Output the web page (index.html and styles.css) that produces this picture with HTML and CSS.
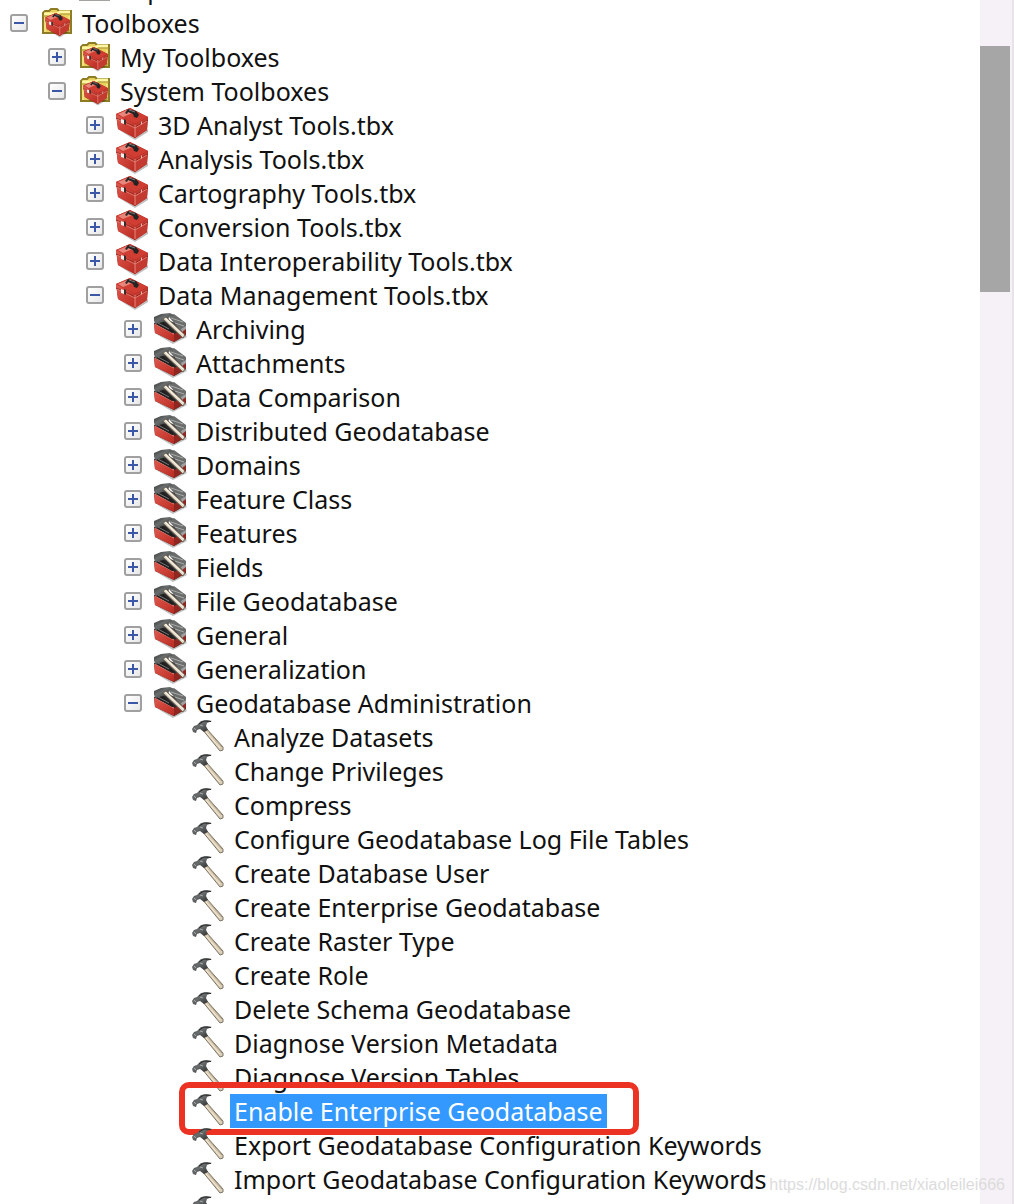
FILE: index.html
```html
<!DOCTYPE html>
<html lang="en">
<head>
    <meta charset="UTF-8">
    <meta name="viewport" content="width=device-width, initial-scale=1.0">
    <title>Toolboxes</title>
    <link rel="stylesheet" href="styles.css">
</head>
<body>
    <svg class="defs" aria-hidden="true">
        <defs>
            <linearGradient id="red" x1="0" y1="0" x2="1" y2="1">
                <stop offset="0" stop-color="#e0584d"/>
                <stop offset="1" stop-color="#b92a21"/>
            </linearGradient>
            <linearGradient id="steel" x1="0" y1="0" x2="1" y2="1">
                <stop offset="0" stop-color="#333"/>
                <stop offset=".4" stop-color="#6a6d6d"/>
                <stop offset="1" stop-color="#1d1e1e"/>
            </linearGradient>
        </defs>
        <symbol id="box" viewBox="0 0 36 34">
            <path d="M3 22l16 10 13-8v-3l-13 8z" fill="#000" opacity=".25"/>
            <path d="M0 6L14 0l18 9-1 13-12 8L2 21z" fill="#9d1c16"/>
            <path d="M0 6L14 0l18 9-13 7z" fill="#cf3d33"/>
            <path d="M2 6l12-5 5 3-12 5z" fill="#e8867b"/>
            <path d="M0 6l19 10v14L2 21z" fill="url(#red)"/>
            <path d="M19 16l13-7-1 13-12 8z" fill="#c23a30"/>
            <path d="M0 10l19 9 13-7" fill="none" stroke="#8a211a" stroke-width="1"/>
            <path d="M1 11l18 9 12-7" fill="none" stroke="#e7786c" stroke-width="1"/>
            <path d="M9 5l3-4 8 2 3 4-2 3-3-1-1-3-5-2-1 2z" fill="#242424"/>
            <path d="M13 2l6 2" stroke="#777" stroke-width="1"/>
            <path d="M5 11l3 1v4l-3-1z" fill="#eee"/>
            <path d="M8 11l2 1v5l-2-1z" fill="#3b2a28"/>
            <path d="M25 14l1-1v3l-1 1z" fill="#d9b5b0"/>
            <path d="M19 17v12" stroke="#e6877d" stroke-width="1"/>
        </symbol>
        <symbol id="folder" viewBox="0 0 36 34">
            <path d="M3 7l2-2h4l2-2h6l2 2h12v22H3z" fill="#e6d25c" stroke="#8d7c25" stroke-width="2"/>
            <path d="M4 8h13l3-2h10" fill="none" stroke="#fff6a4" stroke-width="3"/>
            <path d="M3 10h14l3-2h11" fill="none" stroke="#a89435" stroke-width="1"/>
            <path d="M5 11v15M29 10v4" stroke="#fbf0a0" stroke-width="1"/>
            <use href="#box" x="5" y="7" width="28" height="26"/>
        </symbol>
        <symbol id="toolset" viewBox="0 0 36 34">
            <path d="M2 22l17 10 14-7-2-3-12 7z" fill="#000" opacity=".25"/>
            <path d="M0 11l8-5 24 9v8l-12 7L1 21z" fill="#2c2a2a"/>
            <path d="M0 12l20 10v8L1 21z" fill="url(#red)"/>
            <path d="M20 22l12-6v7l-12 7z" fill="#8f2720"/>
            <path d="M1 12l19 10" stroke="#f08376" stroke-width="1"/>
            <path d="M15 5l5-3 12 9v4l-5 4z" fill="#6b6d6c"/>
            <path d="M17 6l12 4M21 11l9 3" stroke="#a9aba9" stroke-width="1"/>
            <path d="M27 17l5-3v3l-4 3z" fill="#9fa09f"/>
            <path d="M0 5l7-3 9-1 4 2-5 2-1 4-5 1-2 3-5-1-2-3z" fill="url(#steel)"/>
            <path d="M2 12l7-2 11 10-2 1z" fill="#1f1f1f"/>
            <path d="M4 11l11 6" stroke="#777" stroke-width="1"/>
            <path d="M9 7l3-2 19 18-2 3z" fill="#e2d8c6" stroke="#6e655a" stroke-width="1"/>
            <path d="M11 6l18 17" stroke="#fff8ea" stroke-width="1"/>
        </symbol>
        <symbol id="hammer" viewBox="0 0 36 34">
            <path d="M10 9l4-1 17 19v3l-3 1z" fill="#dacdb6" stroke="#7d7364" stroke-width="1"/>
            <path d="M14 12l14 16" stroke="#f5ead8" stroke-width="1"/>
            <path d="M17 12l13 15" stroke="#a3967f" stroke-width="1"/>
            <path d="M0 9l2-3 3-1 4-4 6-1 5 1-5 2-1 3 2 4-4 2-4-3-3 1-1 3-3-1z" fill="url(#steel)"/>
            <path d="M7 4l5-3 7 .5" fill="none" stroke="#2a2c2c" stroke-width="1"/>
            <path d="M2 8l2 2M8 5l3 1" stroke="#a5a8a8" stroke-width="1"/>
        </symbol>
    </svg>

    <main class="panel">
        <ul class="tree">
            <li>
                <ul>
                    <li><div class="row leaf"><svg class="icon"><rect x="2" y="4" width="29" height="24" fill="#d6d6d2" stroke="#a3a39f" stroke-width="2"/></svg><span class="label">Exp</span></div></li>
                </ul>
            </li>
            <li>
                <div class="row"><button class="toggle" aria-expanded="true" aria-label="Toolboxes"></button><svg class="icon"><use href="#folder"/></svg><span class="label">Toolboxes</span></div>
                <ul>
                    <li><div class="row"><button class="toggle" aria-expanded="false" aria-label="My Toolboxes"></button><svg class="icon"><use href="#folder"/></svg><span class="label">My Toolboxes</span></div></li>
                    <li>
                        <div class="row"><button class="toggle" aria-expanded="true" aria-label="System Toolboxes"></button><svg class="icon"><use href="#folder"/></svg><span class="label">System Toolboxes</span></div>
                        <ul>
                            <li><div class="row"><button class="toggle" aria-expanded="false" aria-label="3D Analyst Tools"></button><svg class="icon"><use href="#box"/></svg><span class="label">3D Analyst Tools.tbx</span></div></li>
                            <li><div class="row"><button class="toggle" aria-expanded="false" aria-label="Analysis Tools"></button><svg class="icon"><use href="#box"/></svg><span class="label">Analysis Tools.tbx</span></div></li>
                            <li><div class="row"><button class="toggle" aria-expanded="false" aria-label="Cartography Tools"></button><svg class="icon"><use href="#box"/></svg><span class="label">Cartography Tools.tbx</span></div></li>
                            <li><div class="row"><button class="toggle" aria-expanded="false" aria-label="Conversion Tools"></button><svg class="icon"><use href="#box"/></svg><span class="label">Conversion Tools.tbx</span></div></li>
                            <li><div class="row"><button class="toggle" aria-expanded="false" aria-label="Data Interoperability Tools"></button><svg class="icon"><use href="#box"/></svg><span class="label">Data Interoperability Tools.tbx</span></div></li>
                            <li>
                                <div class="row"><button class="toggle" aria-expanded="true" aria-label="Data Management Tools"></button><svg class="icon"><use href="#box"/></svg><span class="label">Data Management Tools.tbx</span></div>
                                <ul>
                                    <li><div class="row"><button class="toggle" aria-expanded="false" aria-label="Archiving"></button><svg class="icon"><use href="#toolset"/></svg><span class="label">Archiving</span></div></li>
                                    <li><div class="row"><button class="toggle" aria-expanded="false" aria-label="Attachments"></button><svg class="icon"><use href="#toolset"/></svg><span class="label">Attachments</span></div></li>
                                    <li><div class="row"><button class="toggle" aria-expanded="false" aria-label="Data Comparison"></button><svg class="icon"><use href="#toolset"/></svg><span class="label">Data Comparison</span></div></li>
                                    <li><div class="row"><button class="toggle" aria-expanded="false" aria-label="Distributed Geodatabase"></button><svg class="icon"><use href="#toolset"/></svg><span class="label">Distributed Geodatabase</span></div></li>
                                    <li><div class="row"><button class="toggle" aria-expanded="false" aria-label="Domains"></button><svg class="icon"><use href="#toolset"/></svg><span class="label">Domains</span></div></li>
                                    <li><div class="row"><button class="toggle" aria-expanded="false" aria-label="Feature Class"></button><svg class="icon"><use href="#toolset"/></svg><span class="label">Feature Class</span></div></li>
                                    <li><div class="row"><button class="toggle" aria-expanded="false" aria-label="Features"></button><svg class="icon"><use href="#toolset"/></svg><span class="label">Features</span></div></li>
                                    <li><div class="row"><button class="toggle" aria-expanded="false" aria-label="Fields"></button><svg class="icon"><use href="#toolset"/></svg><span class="label">Fields</span></div></li>
                                    <li><div class="row"><button class="toggle" aria-expanded="false" aria-label="File Geodatabase"></button><svg class="icon"><use href="#toolset"/></svg><span class="label">File Geodatabase</span></div></li>
                                    <li><div class="row"><button class="toggle" aria-expanded="false" aria-label="General"></button><svg class="icon"><use href="#toolset"/></svg><span class="label">General</span></div></li>
                                    <li><div class="row"><button class="toggle" aria-expanded="false" aria-label="Generalization"></button><svg class="icon"><use href="#toolset"/></svg><span class="label">Generalization</span></div></li>
                                    <li>
                                        <div class="row"><button class="toggle" aria-expanded="true" aria-label="Geodatabase Administration"></button><svg class="icon"><use href="#toolset"/></svg><span class="label">Geodatabase Administration</span></div>
                                        <ul>
                                            <li><div class="row leaf"><svg class="icon"><use href="#hammer"/></svg><span class="label">Analyze Datasets</span></div></li>
                                            <li><div class="row leaf"><svg class="icon"><use href="#hammer"/></svg><span class="label">Change Privileges</span></div></li>
                                            <li><div class="row leaf"><svg class="icon"><use href="#hammer"/></svg><span class="label">Compress</span></div></li>
                                            <li><div class="row leaf"><svg class="icon"><use href="#hammer"/></svg><span class="label">Configure Geodatabase Log File Tables</span></div></li>
                                            <li><div class="row leaf"><svg class="icon"><use href="#hammer"/></svg><span class="label">Create Database User</span></div></li>
                                            <li><div class="row leaf"><svg class="icon"><use href="#hammer"/></svg><span class="label">Create Enterprise Geodatabase</span></div></li>
                                            <li><div class="row leaf"><svg class="icon"><use href="#hammer"/></svg><span class="label">Create Raster Type</span></div></li>
                                            <li><div class="row leaf"><svg class="icon"><use href="#hammer"/></svg><span class="label">Create Role</span></div></li>
                                            <li><div class="row leaf"><svg class="icon"><use href="#hammer"/></svg><span class="label">Delete Schema Geodatabase</span></div></li>
                                            <li><div class="row leaf"><svg class="icon"><use href="#hammer"/></svg><span class="label">Diagnose Version Metadata</span></div></li>
                                            <li><div class="row leaf"><svg class="icon"><use href="#hammer"/></svg><span class="label">Diagnose Version Tables</span></div></li>
                                            <li><div class="row leaf selected"><svg class="icon"><use href="#hammer"/></svg><span class="label">Enable Enterprise Geodatabase</span></div></li>
                                            <li><div class="row leaf"><svg class="icon"><use href="#hammer"/></svg><span class="label">Export Geodatabase Configuration Keywords</span></div></li>
                                            <li><div class="row leaf"><svg class="icon"><use href="#hammer"/></svg><span class="label">Import Geodatabase Configuration Keywords</span></div></li>
                                            <li><div class="row leaf"><svg class="icon"><use href="#hammer"/></svg><span class="label">Migrate Storage</span></div></li>
                                        </ul>
                                    </li>
                                </ul>
                            </li>
                        </ul>
                    </li>
                </ul>
            </li>
        </ul>
    </main>
    <div class="scrollbar"><div class="thumb"></div></div>
    <div class="watermark">https://blog.csdn.net/xiaoleilei666</div>

    <script>
        document.querySelectorAll('.toggle').forEach((btn) => {
            btn.addEventListener('click', () => {
                const open = btn.getAttribute('aria-expanded') === 'true';
                const list = btn.parentElement.nextElementSibling;
                btn.setAttribute('aria-expanded', String(!open));
                if (list) list.hidden = open;
            });
        });
    </script>
</body>
</html>
```
FILE: styles.css
```css
body {
    display: flex;
    height: 100vh;
    margin: 0;
    overflow: hidden;
    background: #fff;
    color: #111;
    font: 25px/34px "Noto Sans", "Open Sans", sans-serif;
}
.defs {
    position: absolute;
    width: 0;
    height: 0;
}
.panel {
    flex: 1;
    min-width: 0;
    overflow: hidden;
}
ul {
    margin: 0;
    padding: 0 0 0 38px;
    list-style: none;
}
/* list is scrolled part of a row down */
.tree {
    margin-top: -28px;
    padding: 0;
}
.row {
    position: relative;
    display: flex;
    align-items: center;
    width: max-content;
    height: 34px;
    padding-left: 10px;
}
.leaf {
    padding-left: 40px;
}
.toggle {
    display: grid;
    place-items: center;
    width: 18px;
    height: 18px;
    margin: 0 12px 0 0;
    padding: 0;
    border: 2px solid #a0a0a0;
    border-radius: 3px;
    background: linear-gradient(135deg, #fff, #e8e8ea);
}
.toggle::before,
.toggle::after {
    content: "";
    grid-area: 1 / 1;
    width: 10px;
    height: 2px;
    background: #3c56a8;
}
.toggle::after {
    width: 2px;
    height: 10px;
}
.toggle[aria-expanded="true"]::after {
    display: none;
}
.icon {
    width: 36px;
    height: 34px;
    margin-right: 2px;
}
.label {
    padding: 0 4px;
}
.selected .label {
    background: #3399ff;
    color: #fff;
}
.selected::after {
    content: "";
    position: absolute;
    inset: -12px -32px -7px 27px;
    border: 6px solid #ec3323;
    border-radius: 10px;
}
.scrollbar {
    box-sizing: border-box;
    width: 34px;
    padding: 46px 2px 0 0;
    border-right: 2px solid #e8e2e9;
    background: #f6f1f6;
}
.thumb {
    height: 246px;
    background: #a6a6a6;
}
.watermark {
    position: absolute;
    right: 9px;
    bottom: 7px;
    color: #dcdcdc;
    font: 16px/24px "Liberation Sans", Arial, sans-serif;
}
```
